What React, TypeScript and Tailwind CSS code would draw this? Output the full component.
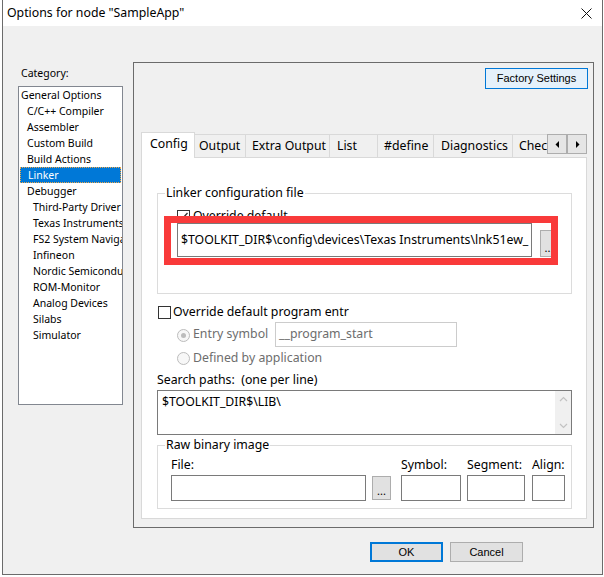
import React from 'react';

const ui = "font-['Noto_Sans',sans-serif]";
const ms = "font-['Liberation_Sans',Arial,sans-serif]";

type Cat = { label: string; level: 0 | 1 | 2; selected?: boolean };

const categories: Cat[] = [
  { label: 'General Options', level: 0 },
  { label: 'C/C++ Compiler', level: 1 },
  { label: 'Assembler', level: 1 },
  { label: 'Custom Build', level: 1 },
  { label: 'Build Actions', level: 1 },
  { label: 'Linker', level: 1, selected: true },
  { label: 'Debugger', level: 1 },
  { label: 'Third-Party Driver', level: 2 },
  { label: 'Texas Instruments', level: 2 },
  { label: 'FS2 System Navigator', level: 2 },
  { label: 'Infineon', level: 2 },
  { label: 'Nordic Semiconductor', level: 2 },
  { label: 'ROM-Monitor', level: 2 },
  { label: 'Analog Devices', level: 2 },
  { label: 'Silabs', level: 2 },
  { label: 'Simulator', level: 2 },
];

const CategoryList = () => (
  <div className="w-[105px] h-[319px] border border-[#828790] bg-white overflow-hidden">
    {categories.map((c) => {
      const pad = c.level === 0 ? 'pl-[2px]' : c.level === 1 ? 'pl-[8px]' : 'pl-[14px]';
      if (c.selected) {
        return (
          <div key={c.label} className="h-[16px] px-[1px]">
            <div className="h-[16px] pl-[7px] pt-[1px] flex items-center bg-[#0078d7] text-white border border-dotted border-[#f0a848] whitespace-nowrap">
              {c.label}
            </div>
          </div>
        );
      }
      return (
        <div key={c.label} className={`h-[16px] ${pad} pt-[2px] flex items-center whitespace-nowrap text-black`}>
          {c.label}
        </div>
      );
    })}
  </div>
);

const tabs = [
  { label: 'Config', cls: 'w-[54px] pl-[8px] pb-[3px] h-[26px] -mb-px bg-white border-l' },
  { label: 'Output', cls: 'w-[51px] pl-[4px] h-[23px] bg-[#f0f0f0]' },
  { label: 'Extra Output', cls: 'w-[84px] pl-[6px] h-[23px] bg-[#f0f0f0]' },
  { label: 'List', cls: 'w-[48px] pl-[7px] h-[23px] bg-[#f0f0f0]' },
  { label: '#define', cls: 'w-[56px] pl-[6px] h-[23px] bg-[#f0f0f0]' },
  { label: 'Diagnostics', cls: 'w-[79px] pl-[7px] h-[23px] bg-[#f0f0f0]' },
  { label: 'Checksum', cls: 'w-[34px] pl-[6px] h-[23px] bg-[#f0f0f0] border-r-0 overflow-hidden' },
];

const Checkbox = ({ checked }: { checked?: boolean }) => (
  <div className="w-[13px] h-[13px] border border-[#333333] bg-white flex items-center justify-center shrink-0">
    {checked && (
      <svg width="11" height="11" viewBox="0 0 11 11">
        <path d="M1.5 5.5 L4 8 L9.5 2" fill="none" stroke="#333333" strokeWidth="1.3" />
      </svg>
    )}
  </div>
);

const Radio = ({ checked, cls = '' }: { checked?: boolean; cls?: string }) => (
  <div className={`${cls} w-[13px] h-[13px] rounded-full border border-[#bcbcbc] bg-[#f7f7f7] flex items-center justify-center shrink-0`}>
    {checked && <div className="w-[5px] h-[5px] rounded-full bg-[#bcbcbc]" />}
  </div>
);

const DotsButton = ({ cls }: { cls: string }) => (
  <div className={`${cls} bg-[#e1e1e1] border border-[#adadad] flex items-end justify-center pb-[3px] text-[11px] leading-none text-black`}>
    ...
  </div>
);

const Arrow = ({ dir }: { dir: 'l' | 'r' }) => (
  <div className="w-[20px] h-[20px] bg-[#e5e5e5] border border-[#adadad] flex items-center justify-center">
    <svg width="5" height="7" viewBox="0 0 5 7">
      {dir === 'l' ? <path d="M4 0 L4 7 L0.5 3.5 Z" fill="#000" /> : <path d="M1 0 L1 7 L4.5 3.5 Z" fill="#000" />}
    </svg>
  </div>
);

const ConfigPanel = () => (
  <div className="w-[446px] h-[362px] border border-[#d9d9d9] bg-white pl-[15px] text-black">
    <fieldset className="mt-[27px] w-[415px] border border-[#dcdcdc] pb-[36px]">
      <legend className="ml-[7px] px-[1px] h-[16px] leading-[16px]">Linker configuration file</legend>
      <div className="mt-[8px] h-[14px] pl-[19px] flex items-center">
        <Checkbox checked />
        <span className="ml-[3px] whitespace-nowrap">Override default</span>
      </div>
      <div className="pl-[19px] flex items-end">
        <div className="w-[355px] h-[34px] border border-[#7a7a7a] bg-white pl-[3px] flex items-center whitespace-nowrap overflow-hidden">
          $TOOLKIT_DIR$\config\devices\Texas Instruments\lnk51ew_
        </div>
        <DotsButton cls="ml-[8px] w-[18px] h-[27px]" />
      </div>
    </fieldset>

    <div className="mt-[10px] h-[16px] pl-[1px] flex items-center">
      <Checkbox />
      <span className="ml-[2px] whitespace-nowrap">Override default program entr</span>
    </div>

    <div className="mt-[2px] h-[25px] pl-[20px] flex items-center text-[#6d6d6d]">
      <Radio checked cls="mt-[2px]" />
      <span className="ml-[3px] w-[82px] whitespace-nowrap">Entry symbol</span>
      <div className="w-[182px] h-[25px] border border-[#cccccc] bg-white pl-[3px] flex items-center">__program_start</div>
    </div>

    <div className="mt-[3px] h-[16px] pl-[20px] flex items-center text-[#6d6d6d]">
      <Radio />
      <span className="ml-[3px] whitespace-nowrap">Defined by application</span>
    </div>

    <div className="mt-[6px] h-[16px] leading-[16px] whitespace-pre">Search paths:  (one per line)</div>

    <div className="mt-[2px] w-[415px] h-[45px] border border-[#7a7a7a] bg-white flex">
      <div className="flex-1 pl-[4px] pt-[3px] leading-[16px]">$TOOLKIT_DIR$\LIB\</div>
      <div className="w-[16px] bg-[#f0f0f0] flex flex-col items-center justify-between py-[5px]">
        <svg width="9" height="6" viewBox="0 0 9 6">
          <path d="M1 5 L4.5 1.5 L8 5" fill="none" stroke="#c2c2c2" strokeWidth="1.2" />
        </svg>
        <svg width="9" height="6" viewBox="0 0 9 6">
          <path d="M1 1 L4.5 4.5 L8 1" fill="none" stroke="#c2c2c2" strokeWidth="1.2" />
        </svg>
      </div>
    </div>

    <fieldset className="mt-[2px] w-[415px] border border-[#dcdcdc] pb-[7px] pl-[13px]">
      <legend className="ml-[-6px] px-[1px] h-[16px] leading-[16px]">Raw binary image</legend>
      <div className="mt-[4px] flex items-end">
        <div className="flex flex-col">
          <span className="h-[16px] leading-[16px]">File:</span>
          <div className="mt-[2px] w-[195px] h-[26px] border border-[#7a7a7a] bg-white" />
        </div>
        <DotsButton cls="ml-[6px] mb-[1px] w-[19px] h-[24px]" />
        <div className="ml-[10px] flex flex-col">
          <span className="h-[16px] leading-[16px]">Symbol:</span>
          <div className="mt-[2px] w-[60px] h-[26px] border border-[#7a7a7a] bg-white" />
        </div>
        <div className="ml-[6px] flex flex-col">
          <span className="h-[16px] leading-[16px]">Segment:</span>
          <div className="mt-[2px] w-[58px] h-[26px] border border-[#7a7a7a] bg-white" />
        </div>
        <div className="ml-[7px] flex flex-col">
          <span className="h-[16px] leading-[16px]">Align:</span>
          <div className="mt-[2px] w-[33px] h-[26px] border border-[#7a7a7a] bg-white" />
        </div>
      </div>
    </fieldset>
  </div>
);

export default function App() {
  return (
    <div className={`relative w-[604px] h-[577px] bg-white overflow-hidden ${ui} text-[12.3px]`}>
      <div className="ml-[2px] w-[601px] h-[575px] border-l border-r border-b border-[#6b6b6b] bg-[#f0f0f0] flex flex-col">
        {/* title bar */}
        <div className="h-[26px] bg-white flex items-center justify-between pl-[4px] pr-[10px] text-black">
          <span className="whitespace-nowrap">Options for node "SampleApp"</span>
          <svg width="11" height="11" viewBox="0 0 11 11">
            <path d="M0.5 0.5 L10.5 10.5 M10.5 0.5 L0.5 10.5" stroke="#111" strokeWidth="1" />
          </svg>
        </div>

        {/* body */}
        <div className="flex pt-[36px] pl-[15px]">
          <div className="mt-[2px] w-[105px] text-[10.5px] text-black">
            <div className="h-[16px] leading-[16px] pl-[3px] pt-[1px]">Category:</div>
            <div className="mt-[6px]">
              <CategoryList />
            </div>
          </div>

          <div className="ml-[10px] w-[461px] h-[466px] border border-[#6b6b6b] flex flex-col">
            <div className="mt-[5px] pr-[5px] flex justify-end">
              <div className={`w-[103px] h-[21px] bg-[#e5f1fb] border border-[#0078d7] flex items-center justify-center ${ms} text-[11px] text-black`}>
                Factory Settings
              </div>
            </div>

            <div className="mt-[43px] ml-[7px]">
              <div className="relative z-10 flex items-end h-[25px]">
                {tabs.map((t) => (
                  <div
                    key={t.label}
                    className={`${t.cls} border-t border-r border-[#d9d9d9] flex items-center whitespace-nowrap text-black`}
                  >
                    {t.label}
                  </div>
                ))}
                <div className="self-start mt-[2px] flex">
                  <Arrow dir="l" />
                  <Arrow dir="r" />
                </div>
              </div>
              <ConfigPanel />
            </div>
          </div>
        </div>

        {/* buttons */}
        <div className={`mt-[14px] pr-[79px] flex justify-end gap-[7px] ${ms} text-[11px] text-black`}>
          <div className="w-[73px] h-[20px] border-2 border-[#0078d7] bg-[#e1e1e1] flex items-center justify-center">OK</div>
          <div className="w-[73px] h-[20px] border border-[#adadad] bg-[#e1e1e1] flex items-center justify-center">Cancel</div>
        </div>
      </div>

      {/* red annotation box */}
      <div className="absolute left-[164px] top-[216px] w-[394px] h-[49px] border-[7px] border-[#f93a3a]" />
    </div>
  );
}
